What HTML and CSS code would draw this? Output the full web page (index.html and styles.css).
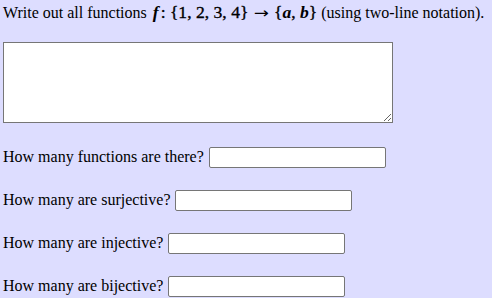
FILE: index.html
```html
<!DOCTYPE html>
<html>
<head>
<meta charset="utf-8">
<link rel="stylesheet" href="styles.css">
</head>
<body>
<div class="page">
  <p class="prompt">Write out all functions <span class="math"><i class="var-f">f</i><span class="colon">:</span> {1, 2, 3, 4}<span class="arrow">→</span>{<i>a</i>, <i>b</i>}</span> (using two-line notation).</p>
  <textarea class="answer-box"></textarea>
  <div class="row first"><label class="label">How many functions are there?</label><input class="field" type="text"></div>
  <div class="row"><label class="label">How many are surjective?</label><input class="field" type="text"></div>
  <div class="row"><label class="label">How many are injective?</label><input class="field" type="text"></div>
  <div class="row"><label class="label">How many are bijective?</label><input class="field" type="text"></div>
</div>
</body>
</html>
```
FILE: styles.css
```css
html, body {
  margin: 0;
  padding: 0;
  background: #ddddff;
}
.page {
  padding: 3px;
  font-family: "Liberation Serif", "Times New Roman", serif;
  font-size: 16px;
  color: #000;
}
.prompt {
  margin: 0;
  line-height: 18px;
  white-space: nowrap;
}
.math {
  font-size: 17.6px;
  font-weight: normal;
  line-height: 18px;
  -webkit-text-stroke: 0.35px #000;
  margin-left: 2px;
}
.math i {
  font-style: italic;
  font-weight: bold;
  -webkit-text-stroke: 0;
}
.colon {
  margin-left: 2px;
}
.arrow {
  display: inline-block;
  font-family: "DejaVu Sans", sans-serif;
  font-size: 15px;
  -webkit-text-stroke: 0;
  margin: 0 6px 0 7px;
  transform: scaleX(1.2);
}
.answer-box {
  display: block;
  box-sizing: border-box;
  width: 390px;
  height: 81px;
  margin: 20px 0 0 0;
  border: 1px solid #767676;
  background: #fff;
  padding: 2px;
}
.row {
  display: flex;
  align-items: baseline;
  gap: 5px;
  margin-top: 22px;
}
.row.first {
  margin-top: 24px;
}
.label {
  line-height: 18px;
}
.field {
  box-sizing: border-box;
  width: 177px;
  height: 21px;
  margin: 0;
  padding: 1px 2px;
  border: 1px solid #767676;
  border-radius: 2px;
  background: #fff;
  font-family: "Liberation Sans", Arial, sans-serif;
  font-size: 13.333px;
}
```
